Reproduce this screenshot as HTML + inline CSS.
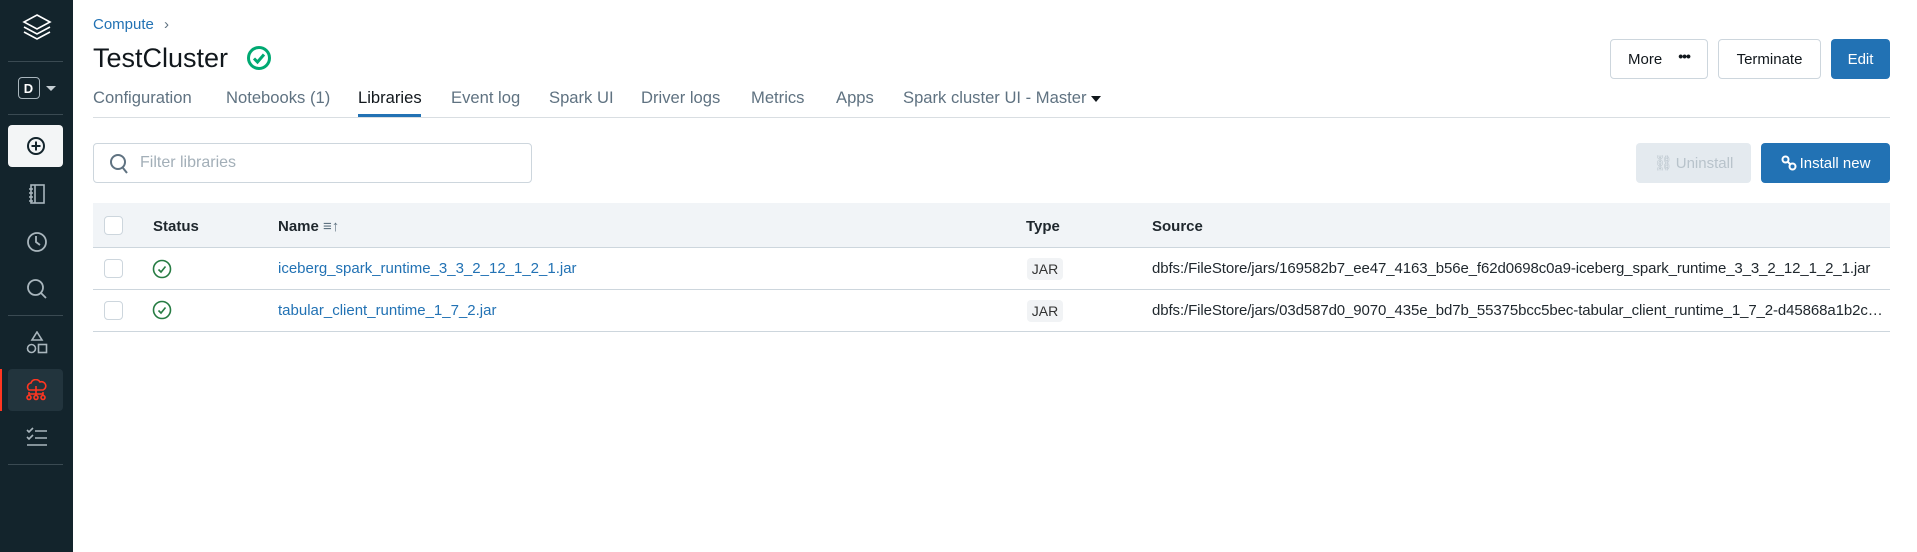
<!DOCTYPE html>
<html><head><meta charset="utf-8"><style>
*{box-sizing:border-box;margin:0;padding:0}
body{width:1917px;height:552px;overflow:hidden;background:#fff;font-family:"Liberation Sans",sans-serif;color:#1f272d;position:relative}
.sb{position:absolute;left:0;top:0;width:73px;height:552px;background:#13242c}
.sep{position:absolute;left:8px;width:55px;height:1px;background:#3a4a52}
.ic{position:absolute;left:0;width:73px;display:flex;justify-content:center;align-items:center}
.abs{position:absolute;white-space:nowrap}
.tab{position:absolute;top:88px;font-size:16.6px;color:#5f7281}
.btn{position:absolute;border-radius:4px;font-size:15px;display:flex;align-items:center;justify-content:center}
.cb{position:absolute;left:104px;width:19px;height:19px;border:1px solid #cdd6dd;border-radius:4px;background:#fff}
.th{position:absolute;top:218px;font-size:15px;font-weight:bold;color:#1f272d}
.td{position:absolute;font-size:15px}
.jar{position:absolute;left:1027px;width:36px;height:22px;background:#f1f3f5;border-radius:4px;font-size:14px;color:#333;display:flex;align-items:center;justify-content:center}
.src{position:absolute;left:1152px;width:736px;font-size:15px;color:#1f272d;overflow:hidden;text-overflow:ellipsis;white-space:nowrap;letter-spacing:-0.1px}
</style></head><body>
<div class="sb">
  <div class="ic" style="top:12px;height:34px"><svg width="32" height="34" viewBox="0 0 32 34" fill="none" stroke="#fff" stroke-width="1.6"><path d="M16 3 L29 10 L16 17 L3 10 Z"/><path d="M3 15 L16 22 L29 15"/><path d="M3 20 L16 27 L29 20"/></svg></div>
  <div class="sep" style="top:61px"></div>
  <div class="ic" style="top:76px;height:24px"><div style="width:22px;height:22px;border:1.5px solid #a9b6bd;border-radius:4px;color:#fff;font-size:13px;font-weight:bold;display:flex;align-items:center;justify-content:center;margin-right:6px">D</div><div style="width:0;height:0;border-left:5px solid transparent;border-right:5px solid transparent;border-top:5px solid #c5ced3"></div></div>
  <div class="sep" style="top:114px"></div>
  <div style="position:absolute;left:8px;top:125px;width:55px;height:42px;background:#f3f5f6;border-radius:4px;display:flex;align-items:center;justify-content:center"><svg width="20" height="20" viewBox="0 0 20 20" fill="none" stroke="#13242c" stroke-width="2"><circle cx="10" cy="10" r="8"/><path d="M10 5.5V14.5M5.5 10H14.5"/></svg></div>
  <div class="ic" style="top:183px;height:22px"><svg width="20" height="22" viewBox="0 0 20 22" fill="none" stroke="#a9b6bd" stroke-width="1.6"><rect x="4" y="2" width="13" height="18"/><path d="M8 2V20M2 6H6M2 10H6M2 14H6M2 18H6"/></svg></div>
  <div class="ic" style="top:230px;height:24px"><svg width="22" height="22" viewBox="0 0 22 22" fill="none" stroke="#a9b6bd" stroke-width="1.8"><circle cx="11" cy="11" r="9"/><path d="M10 5V11L14 14"/></svg></div>
  <div class="ic" style="top:277px;height:24px"><svg width="22" height="22" viewBox="0 0 22 22" fill="none" stroke="#a9b6bd" stroke-width="1.8"><circle cx="9.5" cy="9.5" r="7.5"/><path d="M15 15L20 20"/></svg></div>
  <div class="sep" style="top:315px"></div>
  <div class="ic" style="top:331px;height:24px"><svg width="22" height="24" viewBox="0 0 22 24" fill="none" stroke="#a9b6bd" stroke-width="1.6"><path d="M11 1L16 9H6Z"/><circle cx="5.5" cy="17.5" r="4"/><rect x="12.5" y="13.5" width="8" height="8"/></svg></div>
  <div style="position:absolute;left:0;top:369px;width:2px;height:42px;background:#ff3621"></div>
  <div style="position:absolute;left:8px;top:369px;width:55px;height:42px;background:#22343d;border-radius:4px;display:flex;align-items:center;justify-content:center"><svg width="22" height="22" viewBox="0 0 22 22" fill="none" stroke="#ff3621" stroke-width="1.6"><path d="M4 11 A4 4 0 0 1 6 4 A5 5 0 0 1 15 3 A4 4 0 0 1 18 11 Z"/><path d="M11 7V15M4 15H18V15M4 13V16M11 15V16M18 13V16"/><circle cx="4" cy="18.5" r="2"/><circle cx="11" cy="18.5" r="2"/><circle cx="18" cy="18.5" r="2"/></svg></div>
  <div class="ic" style="top:426px;height:22px"><svg width="22" height="20" viewBox="0 0 22 20" fill="none" stroke="#a9b6bd" stroke-width="1.6"><path d="M1 3L3 5L7 1M1 10L3 12L7 8M9 4H21M9 11H21M1 18H21"/></svg></div>
  <div class="sep" style="top:464px"></div>
</div>

<div class="abs" style="left:93px;top:16px;font-size:15px;color:#2272b4">Compute <span style="color:#5f7281;margin-left:6px">›</span></div>
<div class="abs" style="left:93px;top:43px;font-size:27px;color:#11171c">TestCluster</div>
<svg class="abs" style="left:246px;top:45px" width="26" height="26" viewBox="0 0 26 26" fill="none"><circle cx="13" cy="13" r="10.5" stroke="#00a972" stroke-width="3"/><path d="M8 13.5L11.5 17L18 9.5" stroke="#00a972" stroke-width="3"/></svg>

<div class="btn" style="left:1610px;top:39px;width:98px;height:40px;border:1px solid #cdd6dd;color:#11171c">More<span style="margin-left:16px;font-weight:bold;letter-spacing:-1px;font-size:14px;position:relative;top:-3px">•••</span></div>
<div class="btn" style="left:1718px;top:39px;width:103px;height:40px;border:1px solid #cdd6dd;color:#11171c">Terminate</div>
<div class="btn" style="left:1831px;top:39px;width:59px;height:40px;background:#2272b4;color:#fff">Edit</div>

<div class="tab" style="left:93px">Configuration</div>
<div class="tab" style="left:226px">Notebooks (1)</div>
<div class="tab" style="left:358px;color:#11171c">Libraries</div>
<div style="position:absolute;left:358px;top:114px;width:63px;height:3px;background:#2272b4"></div>
<div class="tab" style="left:451px">Event log</div>
<div class="tab" style="left:549px">Spark UI</div>
<div class="tab" style="left:641px">Driver logs</div>
<div class="tab" style="left:751px">Metrics</div>
<div class="tab" style="left:836px">Apps</div>
<div class="tab" style="left:903px">Spark cluster UI - Master <span style="display:inline-block;width:0;height:0;border-left:5px solid transparent;border-right:5px solid transparent;border-top:6px solid #11171c;vertical-align:middle"></span></div>
<div style="position:absolute;left:93px;top:117px;width:1797px;height:1px;background:#d9dee2"></div>

<div style="position:absolute;left:93px;top:143px;width:439px;height:40px;border:1px solid #cdd6dd;border-radius:4px"></div>
<svg class="abs" style="left:109px;top:153px" width="20" height="22" viewBox="0 0 20 22" fill="none" stroke="#5f7281" stroke-width="2"><circle cx="9" cy="9" r="7"/><path d="M14 15L18 20"/></svg>
<div class="abs" style="left:140px;top:154px;font-size:16px;color:#a3afb8">Filter libraries</div>

<div class="btn" style="left:1636px;top:143px;width:115px;height:40px;background:#e4eaef;color:#b8c3cb"><span style="margin-right:3px">⛓</span>Uninstall</div>
<div class="btn" style="left:1761px;top:143px;width:129px;height:40px;background:#2272b4;color:#fff"><svg width="16" height="16" viewBox="0 0 16 16" fill="none" stroke="#fff" stroke-width="2" style="margin-right:3px"><circle cx="4.5" cy="4.5" r="3"/><circle cx="11.5" cy="11.5" r="3"/><path d="M6.5 6.5L9.5 9.5"/></svg>Install new</div>

<div style="position:absolute;left:93px;top:203px;width:1797px;height:45px;background:#f1f4f7;border-bottom:1px solid #cdd6dd"></div>
<div class="cb" style="top:216px"></div>
<div class="th" style="left:153px">Status</div>
<div class="th" style="left:278px">Name <span style="font-weight:normal;color:#5f7281">≡↑</span></div>
<div class="th" style="left:1026px">Type</div>
<div class="th" style="left:1152px">Source</div>

<div style="position:absolute;left:93px;top:289px;width:1797px;height:1px;background:#cdd6dd"></div>
<div style="position:absolute;left:93px;top:331px;width:1797px;height:1px;background:#cdd6dd"></div>

<div class="cb" style="top:259px"></div>
<svg class="abs" style="left:152px;top:259px" width="20" height="20" viewBox="0 0 20 20" fill="none" stroke="#277c43" stroke-width="1.6"><circle cx="10" cy="10" r="8.5"/><path d="M6.5 10.5L9 13L13.5 7.5"/></svg>
<div class="td" style="left:278px;top:260px;color:#2272b4">iceberg_spark_runtime_3_3_2_12_1_2_1.jar</div>
<div class="jar" style="top:258px">JAR</div>
<div class="src" style="top:260px">dbfs:/FileStore/jars/169582b7_ee47_4163_b56e_f62d0698c0a9-iceberg_spark_runtime_3_3_2_12_1_2_1.jar</div>

<div class="cb" style="top:301px"></div>
<svg class="abs" style="left:152px;top:300px" width="20" height="20" viewBox="0 0 20 20" fill="none" stroke="#277c43" stroke-width="1.6"><circle cx="10" cy="10" r="8.5"/><path d="M6.5 10.5L9 13L13.5 7.5"/></svg>
<div class="td" style="left:278px;top:302px;color:#2272b4">tabular_client_runtime_1_7_2.jar</div>
<div class="jar" style="top:300px">JAR</div>
<div class="src" style="top:302px">dbfs:/FileStore/jars/03d587d0_9070_435e_bd7b_55375bcc5bec-tabular_client_runtime_1_7_2-d45868a1b2c3.jar</div>
</body></html>
